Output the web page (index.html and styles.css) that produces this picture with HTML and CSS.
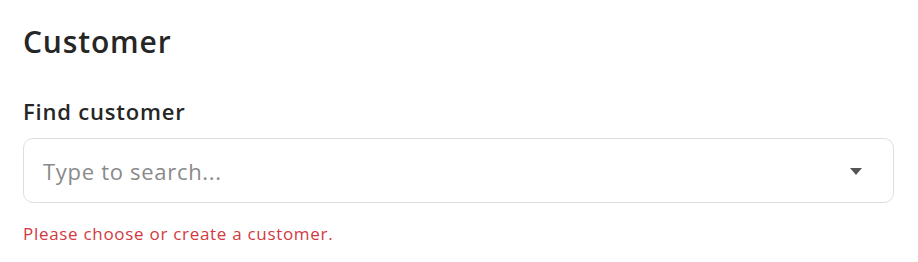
FILE: index.html
```html
<!DOCTYPE html>
<html lang="en">
<head>
  <meta charset="UTF-8">
  <title>Customer</title>
  <link rel="stylesheet" href="styles.css">
</head>
<body>
  <div class="customer-section">
    <h2 class="section-title">Customer</h2>
    <div class="form-row">
      <label for="customerSearch">Find customer</label>
      <div class="select-box">
        <input type="text" id="customerSearch" placeholder="Type to search...">
        <span class="caret"></span>
      </div>
      <div class="error">Please choose or create a customer.</div>
    </div>
  </div>
</body>
</html>
```

FILE: styles.css
```css
body { background: #fff; font-family: "Open Sans", "Noto Sans", sans-serif; margin: 0; color: #262626; }
.customer-section {
  padding: 22px 24px 0 23px;
}
.section-title {
  font-size: 30px;
  font-weight: 600;
  letter-spacing: 0.85px;
  margin: 0 0 34px 0;
  line-height: 40px;
}
.form-row { width: 100%; }
label {
  display: block;
  font-size: 22px;
  font-weight: 600;
  letter-spacing: 0.8px;
  line-height: 30px;
  margin-bottom: 12px;
}
.select-box {
  display: flex;
  align-items: center;
  height: 65px;
  border: 1px solid #dedede;
  border-radius: 10px;
  padding: 0 31px 0 19px;
  box-sizing: border-box;
}
.select-box input {
  flex: 1;
  border: none;
  outline: none;
  font-family: inherit;
  font-size: 22px;
  letter-spacing: 0.7px;
  color: #262626;
  background: transparent;
  padding: 0;
}
.select-box input::placeholder { color: #8a8a8a; }
.caret {
  width: 0;
  height: 0;
  margin-top: 2px;
  border-left: 6.5px solid transparent;
  border-right: 6.5px solid transparent;
  border-top: 7px solid #555;
}
.error {
  color: #d23a3f;
  font-size: 17px;
  letter-spacing: 0.7px;
  margin-top: 20px;
  line-height: 22px;
}
```
